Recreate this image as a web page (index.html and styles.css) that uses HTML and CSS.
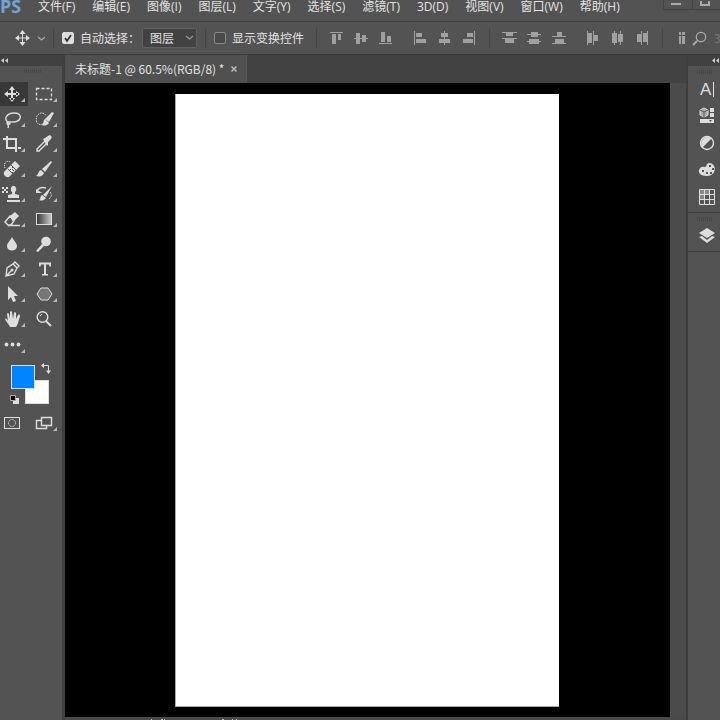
FILE: index.html
```html
<!DOCTYPE html>
<html lang="zh-CN">
<head>
<meta charset="utf-8">
<title>未标题-1</title>
<link rel="stylesheet" href="styles.css">
</head>
<body>
<header class="menubar">
  <span class="logo">PS</span>
  <nav class="menus">
    <a href="#">文件(F)</a><a href="#">编辑(E)</a><a href="#">图像(I)</a><a href="#">图层(L)</a><a href="#">文字(Y)</a><a href="#">选择(S)</a><a href="#">滤镜(T)</a><a href="#">3D(D)</a><a href="#">视图(V)</a><a href="#">窗口(W)</a><a href="#">帮助(H)</a>
  </nav>
  <div class="window-controls">
    <button aria-label="最小化"><svg width="12" height="8"><path d="M1 2h10v2H1z" fill="#aaa"/></svg></button>
    <button aria-label="最大化"><svg width="12" height="8"><path d="M2 -4h8v8H2z" fill="none" stroke="#aaa" stroke-width="2"/></svg></button>
  </div>
</header>

<section class="options">
  <button class="current-tool" aria-label="移动工具">
    <svg width="30" height="18" viewBox="0 0 30 18"><g fill="#ddd"><path d="M7 4h1v10H7zM3 8.500h10v1H3z"/><path d="M7.500 1l3 4h-6zM7.500 17l3-4h-6zM0 9l4-3v6zM15 9l-4-3v6z"/></g><path d="M23 8l3.500 3L30 8" fill="none" stroke="#aaa" stroke-width="1.300"/></svg>
  </button>
  <span class="sep"></span>
  <label class="check"><input type="checkbox" checked><span>自动选择：</span></label>
  <select class="target" aria-label="自动选择目标"><option>图层</option></select>
  <span class="sep"></span>
  <label class="check"><input type="checkbox"><span>显示变换控件</span></label>
  <span class="sep"></span>
  <div class="align">
    <button aria-label="顶边对齐"><svg viewBox="0 0 16 16"><path d="M2 2h13v1H2zM4 4h4v10H4zM10 4h3v6h-3z"/></svg></button>
    <button aria-label="垂直居中对齐"><svg viewBox="0 0 16 16"><path d="M1 8h14v1H1zM3 3h4v11H3zM9 5h4v7H9z"/></svg></button>
    <button aria-label="底边对齐"><svg viewBox="0 0 16 16"><path d="M1 13h13v1H1zM3 2h4v10H3zM9 6h4v6H9z"/></svg></button>
  </div>
  <div class="align">
    <button aria-label="左边对齐"><svg viewBox="0 0 16 16"><path d="M2 1h1v14H2zM4 3h6v4H4zM4 9h10v4H4z"/></svg></button>
    <button aria-label="水平居中对齐"><svg viewBox="0 0 16 16"><path d="M7 1h1v14H7zM4 3h7v4H4zM2 9h11v4H2z"/></svg></button>
    <button aria-label="右边对齐"><svg viewBox="0 0 16 16"><path d="M12 1h1v14h-1zM5 3h6v4H5zM1 9h10v4H1z"/></svg></button>
  </div>
  <span class="sep"></span>
  <div class="align">
    <button aria-label="按顶分布"><svg viewBox="0 0 16 16"><path d="M1 2h15v1H1zM5 3h7v3H5zM1 8h15v1H1zM4 9h9v4H4z"/></svg></button>
    <button aria-label="垂直居中分布"><svg viewBox="0 0 16 16"><path d="M1 4h14v1H1zM5 2h7v5H5zM1 11h14v1H1zM3 9h10v5H3z"/></svg></button>
    <button aria-label="按底分布"><svg viewBox="0 0 16 16"><path d="M1 6h14v1H1zM6 2h5v4H6zM1 13h14v1H1zM4 9h9v4H4z"/></svg></button>
  </div>
  <div class="align">
    <button aria-label="按左分布"><svg viewBox="0 0 16 16"><path d="M2 1h1v14H2zM3 3h4v10H3zM8 1h1v14H8zM9 5h4v6H9z"/></svg></button>
    <button aria-label="水平居中分布"><svg viewBox="0 0 16 16"><path d="M4 1h1v14H4zM2 3h5v10H2zM10 1h1v14h-1zM8 4h5v8H8z"/></svg></button>
    <button aria-label="按右分布"><svg viewBox="0 0 16 16"><path d="M6 1h1v14H6zM2 4h4v8H2zM12 1h1v14h-1zM8 3h4v9H8z"/></svg></button>
  </div>
  <span class="sep"></span>
  <div class="extras">
    <button aria-label="自动对齐"><svg viewBox="0 0 8 16"><path d="M1 2h2v3H1zM4 2h3v3H4zM1 6h2v8H1zM4 6h3v8H4z"/></svg></button>
    <button aria-label="搜索"><svg class="find" viewBox="0 0 16 16"><circle cx="9" cy="7" r="4.700" fill="none" stroke="#aaa" stroke-width="1.300"/><path d="M5 11l-4 4" stroke="#aaa" stroke-width="2"/></svg></button>
    <span class="mode">3D</span>
  </div>
</section>

<main class="workspace">
  <aside class="toolbox">
    <button class="collapse" aria-label="折叠工具"><svg width="8" height="8"><path d="M4 1v5L1 3.500zM8 1v5L5 3.500z" fill="#ccc"/></svg></button>
    <div class="grip"></div>
    <div class="tools">
      <button class="on" aria-label="移动工具"><svg viewBox="0 0 28 24"><path d="M11 6h2v12h-2zM6 11h12v2H6zM12 4l3 4H9zM12 20l3-4H9zM4 12l4-3v6zM20 12l-4-3v6z"/><path class="more" d="M25 16v4h-4z"/></svg></button>
      <button aria-label="矩形选框工具"><svg viewBox="0 0 28 24"><rect class="line" x="4.500" y="6.500" width="15" height="11" stroke-width="1.300" stroke-dasharray="3 2"/><path class="more" d="M25 16v4h-4z"/></svg></button>
      <button aria-label="套索工具"><svg viewBox="0 0 28 24"><path class="line medium" d="M8 15C3 12 7 6 14 6c9 0 8 8 0 9-4 0-7-1-7 1s3 2 3 0-2-2-2 1 1 2 0 4"/><path class="more" d="M25 16v4h-4z"/></svg></button>
      <button aria-label="快速选择工具"><svg viewBox="0 0 28 24"><path class="line" stroke-dasharray="1.500 1" d="M11 17c-6 2-8-3-6-8 2-4 8-4 9 0"/><path d="M20 5l2 1-5 9-4-3zM13 12l4 4c-2 3-6 3-7 2 2-1 1-5 3-6z"/><path class="more" d="M25 16v4h-4z"/></svg></button>
      <button aria-label="裁剪工具"><svg viewBox="0 0 28 24"><path class="line thick" d="M3 7h13v9M7 4v12h9M16 16v4M18 16h3"/><path class="more" d="M25 16v4h-4z"/></svg></button>
      <button aria-label="吸管工具"><svg viewBox="0 0 28 24"><path class="line medium" d="M13 9l-8 8v2h2l8-8"/><path d="M11 7l2-1 3-2c2-2 5 1 3 3l-3 3v3l-1 1z"/><path class="more" d="M25 16v4h-4z"/></svg></button>
      <button aria-label="污点修复画笔工具"><svg viewBox="0 0 28 24"><path d="M4 15L15 4l5 5L9 20c-3 1-6-2-5-5z"/><path d="M8 12l5 5M11 8l5 5" stroke="#535353"/><path d="M10 12h1v1h-1zM12 10h1v1h-1zM12 12h1v1h-1zM13 13h1v1h-1zM12 15h1v1h-1z" fill="#444"/><path class="line" stroke-dasharray="1 1" d="M5 11C3 5 7 3 11 5"/><path class="more" d="M25 16v4h-4z"/></svg></button>
      <button aria-label="画笔工具"><svg viewBox="0 0 28 24"><path d="M19 4l1 1-7 10-3-3zM9 13l3 3c-1 3-4 4-8 3 3-2 2-5 5-6z"/><path class="more" d="M25 16v4h-4z"/></svg></button>
      <button aria-label="图案图章工具"><svg viewBox="0 0 28 24"><path d="M2 5h2v2H2zM6 5h2v2H6zM4 7h2v2H4zM2 9h2v2H2zM6 9h2v2H6z"/><path d="M12 12c1-2-2-3-1-6s4-3 5 0-2 4-1 6l4 1v3H8v-3zM7 18h13v2H7z"/><path class="more" d="M25 16v4h-4z"/></svg></button>
      <button aria-label="历史记录画笔工具"><svg viewBox="0 0 28 24"><path d="M20 4l-6 11-3-2zM10 13l4 3c-2 3-6 3-7 2 2-1 1-4 3-5z"/><path class="line medium" d="M5 9c2-4 5-4 9-3"/><path class="line" d="M18 10c2 2 2 6-2 7" stroke-dasharray="2 1"/><path d="M4 7l6 4H4z"/><path class="more" d="M25 16v4h-4z"/></svg></button>
      <button aria-label="橡皮擦工具"><svg viewBox="0 0 28 24"><path d="M10 9l5-4 4 4-6 6z"/><path class="line medium" d="M10 9l-5 6 3 3h3l3-4zM8 18.500h12"/><path class="more" d="M25 16v4h-4z"/></svg></button>
      <button aria-label="渐变工具"><svg viewBox="0 0 28 24"><defs><linearGradient id="g"><stop stop-color="#333"/><stop offset="1" stop-color="#ccc"/></linearGradient></defs><rect x="4.500" y="6.500" width="15" height="11" fill="url(#g)" stroke="#ddd"/><path class="more" d="M25 16v4h-4z"/></svg></button>
      <button aria-label="模糊工具"><svg viewBox="0 0 28 24"><path d="M12 5c2 4 5 6 5 9 0 6-10 6-10 0 0-3 3-5 5-9z"/><path class="more" d="M25 16v4h-4z"/></svg></button>
      <button aria-label="减淡工具"><svg viewBox="0 0 28 24"><circle cx="14" cy="9.500" r="4.800"/><path d="M10 12l2 2-6 6-2-1z"/><path class="more" d="M25 16v4h-4z"/></svg></button>
      <button aria-label="钢笔工具"><svg viewBox="0 0 28 24"><path class="line medium" d="M6 19l1-8 6-4 4 4-3 6zM6 19l5-5M13 7l2-2 4 4-2 2"/><circle cx="12" cy="13" r="1.500"/><path class="more" d="M25 16v4h-4z"/></svg></button>
      <button aria-label="文字工具"><svg viewBox="0 0 28 24"><path d="M7 5.500h12v4h-1.500l-.5-2h-3v9.500h2v1.500H10V17h2V7.500H9l-.5 2H7z"/><path class="more" d="M25 16v4h-4z"/></svg></button>
      <button aria-label="路径选择工具"><svg viewBox="0 0 28 24"><path d="M8 4l10 10h-4l2 5-3 1-2-5-3 3z"/><path class="more" d="M25 16v4h-4z"/></svg></button>
      <button aria-label="多边形工具"><svg viewBox="0 0 28 24"><path d="M9 6h7l4 6-4 6H9l-4-6z" fill="#777" stroke="#ddd"/><path class="more" d="M25 16v4h-4z"/></svg></button>
      <button aria-label="抓手工具"><svg viewBox="0 0 28 24"><path d="M10 20c-1-3-4-5-5-8 1-1 2 0 3 2L7 7c0-1 2-1 2 0l1 5V5c0-1 2-1 2 0l1 7 1-6c0-1 2-1 2 0v6l2-4c1-1 2 0 2 1-1 3-2 9-4 11z"/><path class="more" d="M25 16v4h-4z"/></svg></button>
      <button aria-label="缩放工具"><svg viewBox="0 0 28 24"><circle class="line medium" cx="10.500" cy="10" r="5.300"/><path class="line thick" d="M14 14l5 5"/><path class="line" d="M8 9l2-2"/></svg></button>
      <button aria-label="更多工具"><svg viewBox="0 0 28 24"><circle cx="6.500" cy="12.500" r="1.900"/><circle cx="12.500" cy="12.500" r="1.900"/><circle cx="18.500" cy="12.500" r="1.900"/><path class="more" d="M25 17v4h-4z"/></svg></button>
    </div>
    <div class="swatches">
      <button class="swatch back" aria-label="背景色"></button>
      <button class="swatch fore" aria-label="前景色"></button>
      <button class="swap" aria-label="切换颜色"><svg width="12" height="12"><path d="M3 3.500h5.500V9" fill="none" stroke="#ddd"/><path d="M1 3.500L4 1v5zM8.500 12L6 8.500h5z" fill="#ddd"/></svg></button>
      <button class="reset" aria-label="默认颜色"><svg width="12" height="12"><path d="M4 4h6v6H4z" fill="#ddd"/><path d="M1.500 1.500h5v5h-5z" fill="#000" stroke="#aaa"/></svg></button>
    </div>
    <div class="tools">
      <button aria-label="快速蒙版"><svg viewBox="0 0 28 24"><rect class="line" x="4.500" y="6.500" width="15" height="11"/><circle class="line" cx="12" cy="12" r="3.500" stroke-dasharray="1 .6"/></svg></button>
      <button aria-label="屏幕模式"><svg viewBox="0 0 28 24"><path class="line medium" d="M9.500 6.500h10v8h-10zM9.500 9.500h-5v8h10v-3"/><path class="more" d="M25 16v4h-4z"/></svg></button>
    </div>
  </aside>

  <section class="document">
    <div class="tabs">
      <div class="tab"><span>未标题-1 @ 60.5%(RGB/8) *</span><button aria-label="关闭"><svg width="8" height="8"><path d="M1.500 1.500l5 5M6.500 1.500l-5 5" stroke="#bbb" stroke-width="1.500"/></svg></button></div>
    </div>
    <div class="view">
      <div class="stage"><div class="artboard"></div></div>
      <div class="scroll"></div>
    </div>
    <footer class="status"><svg width="100" height="3"><path d="M4 2h1v1H4zM14 2h2v1h-2zM17 2h1v1h-1zM75 2h2v1h-2zM85 2h1v1h-1zM89 2h1v1h-1z" fill="#bbb"/></svg></footer>
  </section>

  <aside class="dock">
    <button class="collapse" aria-label="展开面板"><svg width="8" height="8"><path d="M4 1v5L1 3.500zM8 1v5L5 3.500z" fill="#ccc"/></svg></button>
    <div class="panels">
      <button aria-label="字符"><svg viewBox="0 0 20 20"><text x="3" y="16" class="char">A</text><path d="M16 3h1v15h-1z"/></svg></button>
      <button aria-label="库"><svg viewBox="0 0 20 20"><path d="M7 2l4 2v5l-4 2-4-2V4z" fill="#aaa" stroke="#ddd"/><path d="M3 4l4 2 4-2M7 6v5" fill="none" stroke="#555"/><path d="M13 2h4v4h-4zM13 7h4v4h-4zM3 13h14v4H3z"/><path d="M12 14h3l-1.500 2z" fill="#555"/></svg></button>
      <button aria-label="调整"><svg viewBox="0 0 20 20"><circle class="line medium" cx="10" cy="10" r="6.500"/><path d="M14.500 5.500l-9 9a6.400 6.400 0 0 1 9-9z"/></svg></button>
      <button aria-label="颜色"><svg viewBox="0 0 20 20"><path d="M8 7c2 0 1-4 4-4 8 0 8 13-2 13-6 0-9-3-8-6s3-4 6-3z"/><path d="M12 5h2v2h-2zM15 8h2v2h-2zM13 12h2v2h-2zM9 12h2v2H9zM5 10h2v2H5z" fill="#555"/></svg></button>
      <button aria-label="色板"><svg viewBox="0 0 20 20"><path d="M3 3h14v14H3z" fill="#555"/><path d="M3 3h9v4H3zM3 8h5v4H3z" fill="#888"/><path class="line" d="M2.500 2.500h15v15h-15zM7.500 2v16M12.500 2v16M2 7.500h16M2 12.500h16"/></svg></button>
    </div>
    <div class="panels">
      <button aria-label="图层"><svg viewBox="0 0 20 20"><path d="M10 2l8 5-8 5-8-5zM2 11l3-1 5 4 5-4 3 1-8 6z"/></svg></button>
    </div>
  </aside>
</main>
</body>
</html>
```
FILE: styles.css
```css
* { box-sizing: border-box; }

body {
  margin: 0;
  height: 100vh;
  display: flex;
  flex-direction: column;
  overflow: hidden;
  background: #535353;
  color: #e2e2e2;
  font: 12px/16px "Noto Sans CJK SC", sans-serif;
}

button {
  display: block;
  margin: 0;
  padding: 0;
  border: 0;
  background: none;
  color: inherit;
}

svg { display: block; }

/* Menu bar */
.menubar {
  display: flex;
  align-items: flex-start;
  height: 22px;
  border-bottom: 1px solid #3f3f3f;
}

.logo {
  width: 38px;
  color: #70a3d6;
  font: bold 18px/12px "Open Sans", sans-serif;
}

.menus {
  display: flex;
  gap: 17px;
  white-space: nowrap;
  font-family: "Open Sans", "Noto Sans CJK SC", sans-serif;
  line-height: 14px;
}

.menus a {
  color: inherit;
  text-decoration: none;
}

.window-controls {
  display: flex;
  margin-left: auto;
  border: solid #444;
  border-width: 0 0 1px 1px;
}

.window-controls button {
  width: 28px;
  height: 9px;
  padding-left: 6px;
}

.window-controls button + button { border-left: 1px solid #444; }

/* Options bar */
.options {
  display: flex;
  align-items: center;
  flex: none;
  height: 33px;
  padding-left: 15px;
  border-bottom: 1px solid #3a3a3a;
  white-space: nowrap;
}

.options > * { flex: none; }

.sep {
  width: 1px;
  height: 20px;
  margin: 0 8px;
  background: #444;
}

.check {
  display: flex;
  align-items: center;
  gap: 6px;
}

.check + .sep { margin-left: 12px; }

.check input {
  appearance: none;
  flex: none;
  width: 12px;
  height: 12px;
  margin: 0;
  border: 1px solid #888;
  border-radius: 2px;
  background: #4a4a4a;
}

.check input:checked {
  border-color: #ddd;
  background: #ddd url("data:image/svg+xml,%3Csvg xmlns='http://www.w3.org/2000/svg' viewBox='0 0 10 10'%3E%3Cpath d='M2 5l2 3 4-6' fill='none' stroke='%23333' stroke-width='1.800'/%3E%3C/svg%3E");
}

.target {
  appearance: none;
  width: 55px;
  height: 20px;
  margin-left: 2px;
  padding: 0 7px;
  border: 1px solid #606060;
  border-radius: 2px;
  background: #424242 url("data:image/svg+xml,%3Csvg xmlns='http://www.w3.org/2000/svg' width='9' height='6'%3E%3Cpath d='M1 1l3.500 3L8 1' fill='none' stroke='%23999' stroke-width='1.300'/%3E%3C/svg%3E") no-repeat right 2px center;
  color: inherit;
  font: inherit;
}

.align {
  display: flex;
  gap: 9px;
  margin: 0 3px;
}

.align + .align { margin-left: 15px; }

.align svg,
.extras svg {
  height: 16px;
  fill: #a0a0a0;
}

.align svg,
.extras .find { width: 16px; }

.extras {
  display: flex;
  gap: 6px;
  padding-left: 7px;
}

.extras svg { width: 8px; }
.mode { color: #777; }

/* Workspace */
.workspace {
  flex: 1;
  min-height: 0;
  display: grid;
  grid-template-columns: 65px 1fr 34px;
  grid-template-rows: 100%;
}

.collapse {
  width: 100%;
  height: 11px;
  background: #414141;
}

.toolbox { border-right: 3px solid #3f3f3f; }

.grip {
  width: 18px;
  height: 4px;
  margin: 3px auto 9px 24px;
  background: repeating-linear-gradient(90deg, #484848 0 1px, #535353 1px 2px);
}

.tools {
  display: grid;
  grid-template-columns: 28px 28px;
  grid-auto-rows: 24px;
  gap: 1px 4px;
}

.tools .on { background: #383838; }
.tools svg { width: 28px; height: 24px; }
.tools svg,
.panels svg { fill: #ddd; }

.tools svg .line,
.panels svg .line {
  fill: none;
  stroke: #ddd;
}

.medium { stroke-width: 1.4; }
.thick { stroke-width: 2; }
.more { fill: #bbb; }

.swatches {
  position: relative;
  height: 55px;
}

.swatches button { position: absolute; }

.swatch {
  width: 24px;
  height: 24px;
  border: 1px solid #ddd;
}

.back { left: 25px; top: 24px; background: #fff; }
.fore { left: 11px; top: 9px; background: #0084ff; }
.swap { left: 40px; top: 6px; }
.reset { left: 9px; top: 38px; }

/* Document window */
.document {
  display: flex;
  flex-direction: column;
  min-width: 0;
}

.tabs {
  display: flex;
  height: 28px;
  background: #424242;
}

.tab {
  display: flex;
  align-items: center;
  gap: 6px;
  padding: 0 8px 0 10px;
  border-right: 1px solid #5a5a5a;
  background: #505050;
  white-space: nowrap;
}

.view {
  flex: 1;
  min-height: 0;
  display: flex;
}

.stage {
  flex: 1;
  display: flex;
  padding: 11px 111px 10px 110px;
  background: #000;
}

.artboard {
  flex: 1;
  background: #fff;
  border: solid #aaa;
  border-width: 0 0 1px 1px;
}

.scroll {
  width: 16px;
  background: #4b4b4b;
}

.status {
  height: 3px;
  padding-left: 82px;
  background: #494949;
  overflow: hidden;
}

/* Panel dock */
.dock { border-left: 2px solid #3d3d3d; }

.dock .collapse { padding-left: 23px; }

.panels {
  padding: 9px 0 2px 9px;
  border-bottom: 1px solid #3d3d3d;
  background: repeating-linear-gradient(90deg, #484848 0 1px, #535353 1px 2px) no-repeat 9px 4px / 16px 4px;
}

.panels button {
  display: flex;
  align-items: center;
  height: 27px;
}

.panels svg { width: 20px; height: 20px; }
.char { font: 17px "Liberation Sans", sans-serif; }
```
